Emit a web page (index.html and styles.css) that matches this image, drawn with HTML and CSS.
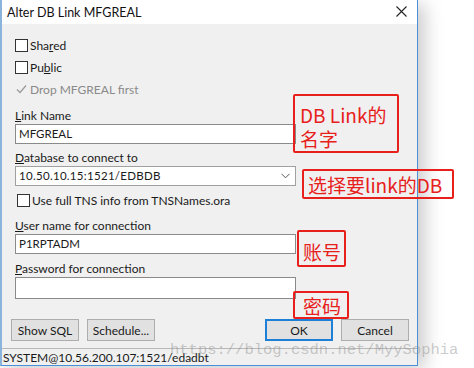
FILE: index.html
```html
<!DOCTYPE html>
<html>
<head>
<meta charset="utf-8">
<link rel="stylesheet" href="styles.css">
</head>
<body>
<div class="stage">
  <div class="dialog">
    <div class="titlebar">
      <span class="title">Alter DB Link MFGREAL</span>
      <svg class="close" width="11" height="11" viewBox="0 0 11 11"><path d="M0.5 0.5 L10.5 10.5 M10.5 0.5 L0.5 10.5" stroke="#222" stroke-width="1.1" fill="none"/></svg>
    </div>
    <div class="body">
      <div class="checks">
        <label class="check"><span class="box"></span><span>Sha<u>r</u>ed</span></label>
        <label class="check"><span class="box"></span><span>Pu<u>b</u>lic</span></label>
        <label class="check disabled"><span class="box nobox"><svg width="13" height="13" viewBox="0 0 13 13"><path d="M2 6.5 L5 9.5 L11 2.5" stroke="#9a9a9a" stroke-width="1.2" fill="none"/></svg></span><span>Drop MFGREAL first</span></label>
      </div>
      <div class="field f-link">
        <div class="lbl"><u>L</u>ink Name</div>
        <div class="input">MFGREAL</div>
      </div>
      <div class="field f-db">
        <div class="lbl"><u>D</u>atabase to connect to</div>
        <div class="input select"><span class="mono">10.50.10.15:1521/EDBDB</span>
          <svg class="chev" width="9" height="6" viewBox="0 0 9 6"><path d="M0.5 0.8 L4.5 4.8 L8.5 0.8" stroke="#555" stroke-width="1" fill="none"/></svg>
        </div>
      </div>
      <label class="check tns"><span class="box"></span><span>Use full TNS info from TNSNames.ora</span></label>
      <div class="field f-user">
        <div class="lbl"><u>U</u>ser name for connection</div>
        <div class="input">P1RPTADM</div>
      </div>
      <div class="field f-pass">
        <div class="lbl"><u>P</u>assword for connection</div>
        <div class="input tall"></div>
      </div>
      <div class="buttons">
        <div class="btn">Show SQL</div>
        <div class="btn">Schedule...</div>
        <div class="spacer"></div>
        <div class="btn primary">OK</div>
        <div class="btn">Cancel</div>
      </div>
    </div>
    <div class="status">SYSTEM@10.56.200.107:1521/edadbt</div>
  </div>

  <div class="note n1">DB Link的<br>名字</div>
  <div class="note n2">选择要link的DB</div>
  <div class="note n3">账号</div>
  <div class="note n4">密码</div>
  <div class="watermark">https://blog.csdn.net/MyySophia</div>
</div>
</body>
</html>
```

FILE: styles.css
```css
* { box-sizing: border-box; }
html, body { margin: 0; padding: 0; background: #fff; }
body { width: 474px; height: 368px; overflow: hidden; font-family: "Lato", "Noto Sans", sans-serif; font-size: 12px; color: #1a1a1a; }
.stage { position: relative; width: 474px; height: 368px; }
.dialog {
  width: 418px; height: 366px;
  border-left: 2px solid #8bb4dc;
  border-right: 1px solid #4a90d9;
  border-bottom: 1px solid #4a90d9;
  box-shadow: 6px 4px 18px rgba(0,0,0,0.22);
  background: #f0f0f0;
  display: flex; flex-direction: column;
}
.titlebar { height: 24px; background: #fff; display: flex; align-items: center; padding: 0 10px 0 5px; }
.title { font-size: 12.5px; color: #111; flex: 1; }
.close { margin-top: -2px; margin-right: 0; }
.body { flex: 1; padding: 15px 0 0 13px; display: flex; flex-direction: column; }
.checks { display: flex; flex-direction: column; gap: 9px; }
.check { display: flex; align-items: center; height: 13px; gap: 2px; font-size: 12px; }
.box { width: 13px; height: 13px; border: 1px solid #333; background: #fff; display: inline-block; }
.box.nobox { border: none; background: transparent; }
.disabled { color: #8a8a8a; }
u { text-decoration: underline; text-underline-offset: 1px; }
.field { display: flex; flex-direction: column; }
.lbl { height: 16px; line-height: 16px; font-size: 12px; }
.f-link { margin-top: 12px; }
.f-db { margin-top: 6px; }
.f-user { margin-top: 11px; }
.f-pass { margin-top: 7px; }
.input { width: 281px; height: 20px; background: #fff; border: 1px solid #8a8a8a; padding: 0 3px; line-height: 18px; font-size: 11.5px; }
.input.tall { height: 22px; }
.select { display: flex; align-items: center; justify-content: space-between; border-color: #a0a0a0; }
.mono { letter-spacing: 0.3px; }
.chev { margin-right: 2px; }
.check.tns { margin-top: 8px; margin-left: 2px; }
.buttons { display: flex; gap: 8px; margin-top: 20px; margin-left: -4px; padding-right: 8px; }
.spacer { flex: 1; }
.btn { width: 68px; height: 22px; border: 1px solid #adadad; background: #e1e1e1; display: flex; align-items: center; justify-content: center; font-size: 12px; }
.btn.primary { border: 2px solid #1e7fd6; }
.status { height: 17px; border-top: 1px solid #b8b8b8; background: #f0f0f0; padding: 2px 0 0 1px; font-size: 12px; line-height: 14px; }
.note {
  position: absolute; border: 2px solid #e8201b; color: #e8201b;
  font-family: "Noto Sans CJK SC", "Noto Sans", sans-serif; font-size: 19px; line-height: 23px;
  border-radius: 2px; padding: 0 4px; white-space: nowrap;
}
.n1 { left: 293px; top: 94px; width: 106px; height: 59px; padding-top: 7px; padding-left: 5px; line-height: 24px; }
.n2 { left: 302px; top: 169px; width: 152px; height: 30px; padding-top: 2px; }
.n3 { left: 297px; top: 230px; width: 49px; height: 37px; padding-top: 8px; padding-left: 4px; }
.n4 { left: 293px; top: 291px; width: 56px; height: 28px; padding-top: 1px; padding-left: 8px; }
.watermark {
  position: absolute; left: 170px; top: 341px;
  font-family: "Liberation Mono", monospace; font-size: 15.5px;
  color: rgba(140,140,140,0.45); white-space: nowrap;
}
```
